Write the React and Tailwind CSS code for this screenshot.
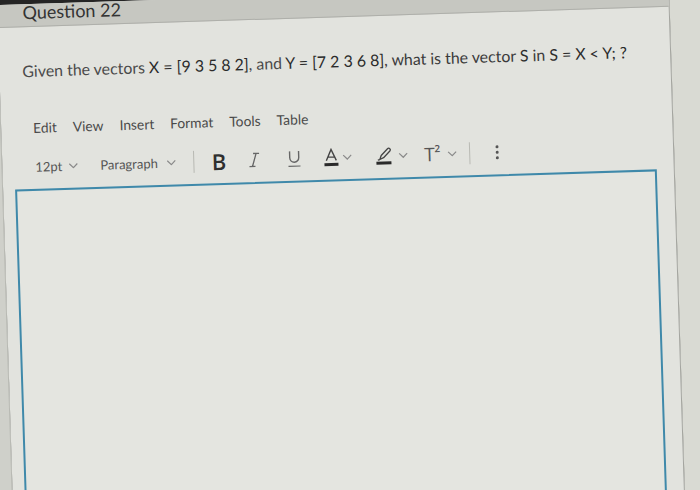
const Chevron = () => (
  <svg width="10" height="6" viewBox="0 0 10 6" className="shrink-0">
    <path d="M1 1l4 4 4-4" stroke="#8a8a8a" strokeWidth="1.2" fill="none" />
  </svg>
);

const Divider = () => <div className="h-[22px] w-px bg-[#b9bab4]" />;

function Toolbar() {
  return (
    <div className="flex h-6 items-center pl-[33px] text-[13px] text-[#555]">
      <span>12pt</span>
      <span className="ml-[6px]"><Chevron /></span>
      <span className="ml-[22px]">Paragraph</span>
      <span className="ml-[8px]"><Chevron /></span>
      <span className="ml-[17px]"><Divider /></span>

      <span className="ml-[18px] font-['Open_Sans',sans-serif] text-[22px] font-semibold leading-none text-[#2f2f2f]">B</span>

      <svg className="ml-[21px]" width="14" height="18" viewBox="0 0 14 18">
        <path d="M6 2.5h6M2 15.5h6M9 2.5l-4 13" stroke="#666" strokeWidth="1.3" fill="none" />
      </svg>

      <svg className="ml-[25px]" width="16" height="20" viewBox="0 0 16 20">
        <path d="M3.5 2.5v6.5a4.5 4.5 0 0 0 9 0v-6.5" stroke="#666" strokeWidth="1.4" fill="none" />
        <path d="M2 17.5h12" stroke="#666" strokeWidth="1.2" />
      </svg>

      <svg className="ml-[21px]" width="16" height="20" viewBox="0 0 16 20">
        <path d="M3 13L8 2l5 11M5 9.5h6" stroke="#444" strokeWidth="1.4" fill="none" />
        <rect x="1" y="15.5" width="14" height="3" fill="#2a2a2a" />
      </svg>
      <span className="ml-[3px]"><Chevron /></span>

      <svg className="ml-[23px]" width="18" height="20" viewBox="0 0 18 20">
        <path d="M4.5 13.5l1.5-4 6.5-6.5a1.6 1.6 0 0 1 2.3 2.3L8.3 11.8z" stroke="#444" strokeWidth="1.3" fill="none" strokeLinejoin="round" />
        <path d="M4.5 13.5L2.5 14" stroke="#444" strokeWidth="1.3" />
        <rect x="1" y="15.5" width="15" height="3" fill="#2a2a2a" />
      </svg>
      <span className="ml-[5px]"><Chevron /></span>

      <span className="ml-[16px] flex items-start font-['Open_Sans',sans-serif] text-[#555]">
        <span className="text-[19px] leading-none">T</span>
        <span className="-mt-[2px] text-[10px] font-semibold leading-none">2</span>
      </span>
      <span className="ml-[7px]"><Chevron /></span>

      <span className="ml-[12px]"><Divider /></span>

      <svg className="ml-[25px]" width="4" height="16" viewBox="0 0 4 16">
        <circle cx="2" cy="2.5" r="1.5" fill="#555" />
        <circle cx="2" cy="8" r="1.5" fill="#555" />
        <circle cx="2" cy="13.5" r="1.5" fill="#555" />
      </svg>
    </div>
  );
}

export default function App() {
  const dark = "text-[#2b2b2b]";
  return (
    <div className="relative h-[490px] w-[700px] overflow-hidden bg-[#d9dad3] font-['Lato','Noto_Sans',sans-serif]">
      <div className="-ml-5 -mt-5 flex h-[530px] w-[740px] rotate-[-1.8deg] bg-[#242424] pt-[14px]">
        <div className="w-[25px] border-r border-[#b8b9b3] bg-[#cfd0ca]" />

        <div className="flex w-[672px] flex-col border-r border-[#a3a49f] bg-[#e2e3de]">
          <div className="h-[28px] overflow-hidden border-b border-[#aeafaa] bg-[#c6c7c1] pl-[25px]">
            <div className="-mt-[1px] text-[18px] leading-[18px] text-[#333]">Question 22</div>
          </div>

          <p className="mt-[35px] whitespace-nowrap pl-[23px] text-[15.9px] leading-[18px] text-[#4a4a4a]">
            Given the vectors <span className={dark}>X = [9 3 5 8 2]</span>, and{" "}
            <span className={dark}>Y = [7 2 3 6 8]</span>
            <span className="text-[#3a3a3a]">, what is the vector </span>
            <span className={dark}>S</span>
            <span className="text-[#3a3a3a]"> in </span>
            <span className={dark}>S = X &lt; Y; ?</span>
          </p>

          <nav className="mt-[40px] flex gap-[16px] pl-[32px] text-[13.8px] leading-4 text-[#4a4a4a]">
            <span>Edit</span>
            <span>View</span>
            <span>Insert</span>
            <span>Format</span>
            <span>Tools</span>
            <span>Table</span>
          </nav>

          <div className="mt-[19px]">
            <Toolbar />
          </div>

          <div className="ml-[12px] mt-[10px] h-[400px] w-[642px] border-2 border-[#3f89aa] bg-[#e4e5e0]" />
        </div>

        <div className="flex-1 bg-[#d9dad3]" />
      </div>
    </div>
  );
}
